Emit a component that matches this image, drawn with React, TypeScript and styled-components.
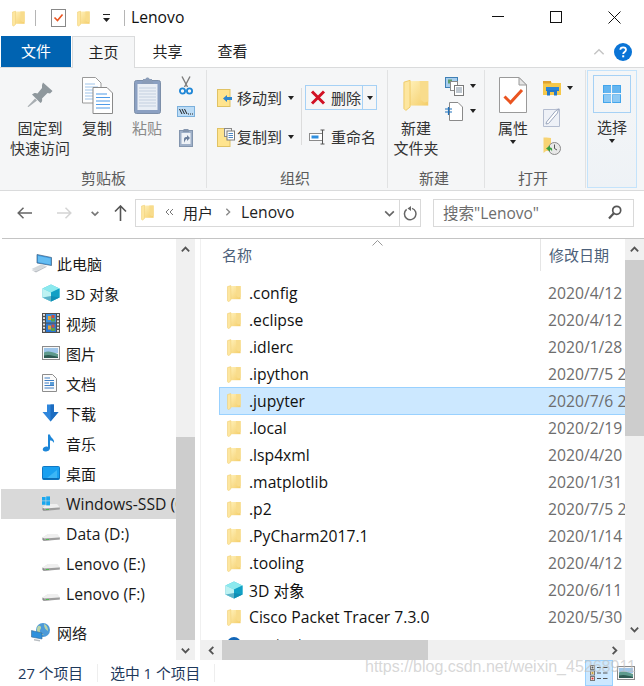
import React from "react";
import styled, { createGlobalStyle } from "styled-components";

const Global = createGlobalStyle`
  html, body { margin: 0; padding: 0; background: #fff; overflow: hidden; }
  * { box-sizing: border-box; }
  body { font-family: "Open Sans", "Noto Sans CJK SC", sans-serif; font-size: 15px; color: #1a1a1a; }
`;

const Window = styled.div`
  position: relative; width: 644px; height: 686px; display: flex; flex-direction: column; overflow: hidden; background: #fff;
`;

/* ---------- title bar ---------- */
const TitleBar = styled.div`display: flex; align-items: center; height: 36px; padding-left: 12px; flex: none;`;
const TitleDivider = styled.span<{ $l: number; $r: number }>`
  width: 1px; height: 16px; background: #b5b5b5; margin: 0 ${p => p.$r}px 0 ${p => p.$l}px;
`;
const TitleText = styled.span`flex: 1; font-size: 15.7px; line-height: 20px; color: #111; margin-bottom: 2px;`;
const WindowButton = styled.div`width: 58px; height: 36px; display: flex; align-items: center; justify-content: center; margin-top: -2px;`;
const WindowControls = styled.div`display: flex; margin-right: 1px;`;
const QuickGap = styled.span<{ $w: number }>`display: inline-block; width: ${p => p.$w}px;`;

/* ---------- tabs ---------- */
const TabRow = styled.div`display: flex; align-items: stretch; height: 31px; padding-left: 1px; flex: none;`;
const FileTab = styled.div`
  width: 70px; background: #0063b1; color: #fff; display: flex; align-items: center; justify-content: center; font-size: 15px; padding-bottom: 2px;
`;
const Tab = styled.div<{ $active?: boolean }>`
  width: ${p => (p.$active ? 63 : 65)}px; display: flex; align-items: center; justify-content: center; font-size: 15px; color: #222;
  margin-left: ${p => (p.$active ? 1 : 0)}px;
  padding-bottom: ${p => (p.$active ? 3 : 2)}px;
  background: ${p => (p.$active ? "#f5f6f7" : "transparent")};
  border: ${p => (p.$active ? "1px solid #dadbdc" : "none")};
  border-bottom: none;
  height: ${p => (p.$active ? 32 : 31)}px;
  position: relative; z-index: 1;
`;
const TabRight = styled.div`margin-left: auto; display: flex; align-items: center; gap: 8px; padding-right: 12px;`;

/* ---------- ribbon ---------- */
const Ribbon = styled.div`
  display: flex; height: 124px; flex: none; background: #f5f6f7; border-top: 1px solid #dadbdc; border-bottom: 1px solid #dadbdc; padding: 2px 0 2px 1px;
`;
const Group = styled.div<{ $w: number }>`
  width: ${p => p.$w}px; display: flex; flex-direction: column; border-right: 1px solid #e1e2e3; flex: none;
`;
const GroupBody = styled.div<{ $pl: number }>`flex: 1; display: flex; padding-left: ${p => p.$pl}px; padding-top: 5px;`;
const GroupLabel = styled.div<{ $pr?: number }>`
  height: 20px; line-height: 20px; text-align: center; font-size: 15px; color: #5b5b5b; padding-right: ${p => p.$pr ?? 0}px;
`;
const BigButton = styled.div<{ $w: number; $mr?: number; $muted?: boolean }>`
  width: ${p => p.$w}px; margin-right: ${p => p.$mr ?? 0}px; display: flex; flex-direction: column; align-items: center;
  font-size: 15px; line-height: 20px; color: ${p => (p.$muted ? "#8a8a8a" : "#333")}; white-space: nowrap;
`;
const BigText = styled.div`text-align: center;`;
const BigIcon = styled.div`height: 40px; margin-bottom: 3px; display: flex; align-items: center; justify-content: center;`;
const Caret = styled.span`display: block; width: 0; height: 0; border: 3px solid transparent; border-top: 4px solid #222; border-bottom: none; flex: none;`;
const BigCaret = styled(Caret)`margin-top: 2px;`;
const SmallColumn = styled.div<{ $gap: number; $pt: number; $w: number; $align?: string }>`
  width: ${p => p.$w}px; display: flex; flex-direction: column; gap: ${p => p.$gap}px; padding-top: ${p => p.$pt}px;
  align-items: ${p => p.$align ?? "center"};
`;
const SmallRow = styled.div`display: flex; align-items: center; font-size: 15px; line-height: 20px; height: 20px; color: #333; white-space: nowrap;`;
const RowIconBox = styled.span<{ $w: number; $pl?: number }>`width: ${p => p.$w}px; padding-left: ${p => p.$pl ?? 0}px; display: flex; align-items: center; flex: none;`;
const RowCaret = styled(Caret)<{ $ml: number }>`margin-left: ${p => p.$ml}px;`;
const OrgLeft = styled.div`width: 84px; padding-top: 13px; display: flex; flex-direction: column; gap: 19px;`;
const OrgSeparator = styled.div`width: 1px; height: 57px; margin-top: 13px; background: #dcdcdc; margin-right: 3px;`;
const OrgRight = styled.div`width: 73px; padding-top: 10px; display: flex; flex-direction: column;`;
const DeleteButton = styled.div`
  display: flex; align-items: center; width: 72px; height: 25px; border: 1px solid #a6d1f5; margin-bottom: 17px; font-size: 15px; color: #333;
`;
const DeleteMain = styled.div`display: flex; align-items: center; padding-left: 4px; width: 57px; gap: 5px; height: 100%; border-right: 1px solid #a6d1f5;`;
const DeleteDrop = styled.div`flex: 1; display: flex; align-items: center; justify-content: center;`;
const SelectGroup = styled.div`
  width: 50px; margin-left: 1px; display: flex; flex-direction: column; flex: none; align-items: center; position: relative;
  border: 1px solid #c4e3fb; background: linear-gradient(#f5f6f7, #eef2f6);
`;
const SelectInner = styled.div`
  width: 38px; height: 38px; margin-top: 4px; border: 1px solid #a6d1f5; display: flex; align-items: center; justify-content: center;
`;
const SelectLabel = styled.div`font-size: 15px; line-height: 20px; margin-top: 4px; color: #333;`;

/* ---------- address row ---------- */
const AddressRow = styled.div`
  display: flex; align-items: center; height: 48px; flex: none; margin-left: 2px; border-bottom: 1px solid #c4c4c4; padding: 0 10px 3px 15px;
`;
const NavButton = styled.span<{ $w: number; $mr: number }>`width: ${p => p.$w}px; margin-right: ${p => p.$mr}px; display: flex; justify-content: center; align-items: center; flex: none;`;
const AddressBox = styled.div`
  width: 286px; height: 28px; border: 1px solid #d9d9d9; display: flex; align-items: center; padding-left: 5px; margin-right: 12px; flex: none; font-size: 15px; color: #222;
`;
const Crumb = styled.span<{ $ml: number; $latin?: boolean }>`
  margin-left: ${p => p.$ml}px; margin-bottom: 2px; display: flex; align-items: center; white-space: nowrap;
  font-size: ${p => (p.$latin ? 15.7 : 15)}px;
`;
const AddressEnd = styled.div`margin-left: auto; display: flex; align-items: center; height: 100%;`;
const AddressRefresh = styled.div`width: 21px; height: 100%; border-left: 1px solid #d9d9d9; display: flex; align-items: center; justify-content: center; margin-left: 3px;`;
const SearchBox = styled.div`
  width: 201px; height: 28px; border: 1px solid #d9d9d9; display: flex; align-items: center; justify-content: space-between; padding: 0 11px 2px 9px; font-size: 15.5px; color: #6d6d6d; flex: none;
`;

/* ---------- main ---------- */
const Main = styled.div`display: flex; height: 421px; flex: none;`;
const NavPane = styled.div`width: 176px; padding: 10px 0 0 1px; overflow: hidden; flex: none;`;
const NavRow = styled.div<{ $top?: boolean; $selected?: boolean; $latin?: boolean }>`
  height: 30px; display: flex; align-items: center; white-space: nowrap; color: #1a1a1a; overflow: hidden;
  font-size: ${p => (p.$latin ? 15.7 : 15)}px;
  padding-left: ${p => (p.$top ? 30 : 41)}px;
  padding-bottom: ${p => (p.$latin ? 0 : 2)}px;
  background: ${p => (p.$selected ? "#d9d9d9" : "transparent")};
`;
const NavIcon = styled.span<{ $top?: boolean }>`
  width: ${p => (p.$top ? 26 : 24)}px; display: flex; align-items: center; flex: none;
`;
const NavGap = styled.div`height: 9px;`;
const VScroll = styled.div`width: 19px; background: #f0f0f0; display: flex; flex-direction: column; flex: none;`;
const ScrollButton = styled.div<{ $size: number }>`flex: 0 0 ${p => p.$size}px; display: flex; align-items: center; justify-content: center;`;
const ScrollThumb = styled.div<{ $size: number }>`flex: 0 0 ${p => p.$size}px; background: #cdcdcd;`;
const ScrollTrack = styled.div`flex: 1;`;
const PaneDivider = styled.div`width: 6px; border-right: 1px solid #f0f0f0; flex: none;`;
const FilePane = styled.div`flex: 1; display: flex; flex-direction: column; min-width: 0;`;
const FileBody = styled.div`flex: 1; display: flex; min-height: 0;`;
const FileArea = styled.div`flex: 1; position: relative; overflow: hidden; min-width: 0;`;
const FileVScroll = styled(VScroll)`height: 401px;`;
const Header = styled.div`display: flex; height: 32px; margin-bottom: 8px; font-size: 15px; color: #4c607a;`;
const HeaderName = styled.div`width: 340px; padding-left: 21px; border-right: 1px solid #e5e5e5; line-height: 32px;`;
const HeaderDate = styled.div`padding-left: 8px; line-height: 32px; white-space: nowrap;`;
const SortCaret = styled.svg`position: absolute; left: 171px; top: 1px;`;
const Row = styled.div<{ $selected?: boolean }>`
  display: grid; grid-template-columns: 22px 299px 1fr; align-items: center; height: 27px; margin-left: 18px; padding-left: 7px;
  border: 1px solid ${p => (p.$selected ? "#99d1ff" : "transparent")};
  border-bottom: none; border-right: none;
  background: ${p => (p.$selected ? "#cce8ff" : "transparent")};
  box-shadow: ${p => (p.$selected ? "0 1px 0 #99d1ff" : "none")};
  font-size: 15.7px; white-space: nowrap;
`;
const RowIcon = styled.span<{ $wide?: boolean }>`display: flex; align-items: center; margin-left: ${p => (p.$wide ? -2 : 0)}px;`;
const RowName = styled.span`color: #111; overflow: hidden;`;
const RowDate = styled.span`color: #6d6d6d; overflow: hidden;`;
const BottomBar = styled.div`display: flex; height: 20px; flex: none;`;
const HScroll = styled.div`flex: 1; display: flex; background: #f0f0f0;`;
const Corner = styled.div`width: 19px;`;
const StatusBar = styled.div`flex: 1; display: flex; align-items: center; padding-left: 18px; font-size: 14.8px; color: #1e395b;`;
const StatusText = styled.span`margin-bottom: 2px;`;
const StatusSep = styled.span<{ $l: number; $r: number }>`width: 1px; height: 18px; background: #eeeeee; margin: 0 ${p => p.$r}px 0 ${p => p.$l}px;`;
const ViewButtons = styled.div`margin-left: auto; display: flex; align-items: center; height: 100%; padding-right: 9px;`;
const DetailsButton = styled.div`
  width: 28px; height: 100%; background: #cce8ff; border: 1px solid #99d1ff; display: flex; align-items: center; justify-content: center; margin-right: 4px;
`;
const Watermark = styled.div`
  position: absolute; left: 365px; top: 658px; font-family: "Liberation Sans", sans-serif; font-size: 16px; color: rgba(190,190,190,.62); white-space: nowrap; pointer-events: none;
`;

/* ---------- drawings ---------- */
const Folder = ({ w = 14, h = 17 }: { w?: number; h?: number }) => (
  <svg width={w} height={h} viewBox="0 0 14 17">
    <defs>
      <linearGradient id="fg" x1="0" y1="0" x2="1" y2="1">
        <stop offset="0" stopColor="#fff0b8" />
        <stop offset="1" stopColor="#f4cd68" />
      </linearGradient>
    </defs>
    <path d="M3.5 1H13.6V14.2H3.5Z" fill="url(#fg)" />
    <path d="M9 1H13.6V12L11.5 12.5L9.5 11Z" fill="#f8dc8c" />
    <path d="M0.5 1.6L3.8 0.6V15L1.5 16.8L0.5 15.8Z" fill="#fde69f" stroke="#eec965" strokeWidth=".5" />
  </svg>
);
const Cube = ({ s = 18 }: { s?: number }) => (
  <svg width={s} height={s} viewBox="0 0 18 18">
    <path d="M9 0.5L17.5 4.5V13.5L9 17.5L0.5 13.5V4.5Z" fill="#3fc4d8" />
    <path d="M9 0.5L17.5 4.5L9 8.5L0.5 4.5Z" fill="#8ce9ee" />
    <path d="M0.5 4.5L9 8.5V17.5L0.5 13.5Z" fill="#bdf2f2" />
    <path d="M9 8.5L17.5 4.5V13.5L9 17.5Z" fill="#12a0c5" />
    <path d="M9 12L17.5 13.5L9 17.5L0.5 13.5Z" fill="#0d7fa8" opacity=".55" />
  </svg>
);
const Film = () => (
  <svg width="18" height="20" viewBox="0 0 18 20">
    <rect x="0" y="0" width="18" height="20" fill="#4e4e4e" />
    <g fill="#e5e5e5">
      {[1, 4.2, 7.4, 10.6, 13.8, 17].map(y => <rect key={y} x="1" y={y} width="2" height="1.8" />)}
      {[1, 4.2, 7.4, 10.6, 13.8, 17].map(y => <rect key={y} x="15" y={y} width="2" height="1.8" />)}
    </g>
    <rect x="4" y="1" width="10" height="8.5" fill="#3b8fe0" />
    <rect x="4" y="10.5" width="10" height="8.5" fill="#2b76d2" />
    <rect x="6" y="3" width="3" height="4" fill="#e0a33a" /><rect x="9.5" y="2" width="3" height="3" fill="#c94f3c" /><rect x="9" y="5.5" width="4" height="3" fill="#5aa04a" />
    <rect x="6" y="12.5" width="3" height="4" fill="#e0a33a" /><rect x="9.5" y="11.5" width="3" height="3" fill="#c94f3c" /><rect x="9" y="15" width="4" height="3" fill="#5aa04a" />
  </svg>
);
const PictureIcon = ({ w = 18, h = 14 }: { w?: number; h?: number }) => (
  <svg width={w} height={h} viewBox="0 0 18 14">
    <rect x=".5" y=".5" width="17" height="13" fill="#f7f7f7" stroke="#8b8b8b" />
    <rect x="2" y="2" width="14" height="5" fill="#9fc6ea" />
    <path d="M2 6.5C6 4.5 10 6 16 8V12H2Z" fill="#5e9a8c" />
    <path d="M2 9.5C7 8 11 9.5 16 11V12H2Z" fill="#2e5a52" />
  </svg>
);
const DocIcon = () => (
  <svg width="15" height="18" viewBox="0 0 15 18">
    <path d="M.5.5H10.5L14.5 4.5V17.5H.5Z" fill="#fbfbfb" stroke="#8d8d8d" />
    <path d="M2.5 4H8M2.5 6.5H12M2.5 9H7M2.5 11.5H12M2.5 14H12" stroke="#3f7fc4" strokeWidth="1" />
    <rect x="8" y="8" width="4" height="3" fill="#5c9ed8" />
  </svg>
);
const DownArrow = () => (
  <svg width="17" height="18" viewBox="0 0 17 18">
    <path d="M5 .5H12V8H16.5L8.5 17.5L.5 8H5Z" fill="#2f86dc" />
    <path d="M8.5 .5H12V8H16.5L8.5 17.5Z" fill="#1c6cc0" />
  </svg>
);
const Note = () => (
  <svg width="14" height="18" viewBox="0 0 14 18">
    <path d="M6 0.5H8C8.5 4 13 5 12 9C11 7 9.5 6.5 8 6.5V14C8 16.5 5.5 17.5 3.5 17.5C1.5 17.5 .5 16.5 .8 15C1.2 13 4 12 6 13Z" fill="#1d86d8" />
  </svg>
);
const Desktop = () => (
  <svg width="18" height="14" viewBox="0 0 18 14">
    <rect x=".5" y=".5" width="17" height="13" rx="1" fill="#19a0f0" stroke="#1078c4" />
    <path d="M5 12L15 4V12Z" fill="#3cb6f6" />
    <rect x="1" y="12" width="16" height="1.4" fill="#0c6cb4" />
  </svg>
);
const Drive = ({ win }: { win?: boolean }) => (
  <svg width="18" height="16" viewBox="0 0 18 16">
    <path d="M0.5 11.5L6 8H15L17.8 11.5V13.5L2 14.5L0.5 13.5Z" fill="#dcdcdc" />
    <path d="M0.5 11.5L2 12.5L17.8 11.5L15 8H6Z" fill="#efefef" />
    <path d="M0.5 11.5L2 12.5V15L0.5 14Z" fill="#8a8a8a" />
    <path d="M2 12.5L17.8 11.5V13.5L2 15Z" fill="#9d9d9d" />
    <rect x="4" y="13" width="3" height="1" fill="#4dbd4d" />
    {win && (
      <g fill="#19a7ef">
        <rect x="0" y="1" width="3.6" height="3.6" /><rect x="4.2" y="0.4" width="3.8" height="4.2" />
        <rect x="0" y="5.2" width="3.6" height="3.6" /><rect x="4.2" y="5.2" width="3.8" height="4.2" />
      </g>
    )}
  </svg>
);
const ComputerIcon = () => (
  <svg width="21" height="19" viewBox="0 0 21 19">
    <path d="M6 .5L20.5 3.5V11.5L6 9Z" fill="#3f9fe6" stroke="#3e5f80" strokeWidth=".7" />
    <path d="M7 2L19.5 4.5V10.5L7 8Z" fill="#65bdf2" />
    <path d="M0.5 15L10 10.5L15.5 12L5 17Z" fill="#d5d9dc" />
    <path d="M5 17L15.5 12L15.5 13L5 18.5L.5 16Z" fill="#bcc1c6" />
  </svg>
);
const NetworkIcon = () => (
  <svg width="20" height="19" viewBox="0 0 20 19">
    <circle cx="12" cy="7" r="7" fill="#4d9ad8" />
    <path d="M7 3C10 2 11 5 9 7C8 9 11 11 13 12L9 12C6 10 5 6 7 3ZM13 1C16 2 17 5 17 8C15 7 13 5 13 1Z" fill="#b8d4a8" />
    <path d="M0.5 7.5L11 10V16L0.5 14Z" fill="#2e90dc" stroke="#3a6a90" strokeWidth=".6" />
    <path d="M3 16L9 17V18.5L3 17.5Z" fill="#b9bec2" />
  </svg>
);
const Pin = () => (
  <svg width="26" height="26" viewBox="0 0 26 26">
    <path d="M16 0.5L25.5 9L23 11.5L20.5 11L15 16.5C15.5 18.5 15 20 13.5 21L5 12.5C6.5 11 8.5 10.5 10.5 11.5L15 6V3Z" fill="#8f989d" />
    <path d="M8 16.5L10 18.5L1.5 25L0.5 24.5Z" fill="#a8aeb2" />
  </svg>
);
const CopyIcon = () => (
  <svg width="31" height="37" viewBox="0 0 31 37">
    <path d="M.5.5H13.5L19 6V26H.5Z" fill="#fff" stroke="#9a9a9a" />
    <path d="M3 7H13M3 10H16M3 13H16M3 16H16M3 19H16M3 22H16" stroke="#9fc4ea" />
    <path d="M11 10.5H25L30.5 16V36.5H11Z" fill="#fff" stroke="#8a8a8a" />
    <path d="M14 17H25M14 20.5H28M14 24H28M14 27.5H28M14 31H28" stroke="#4f9be8" />
  </svg>
);
const PasteIcon = () => (
  <svg width="27" height="38" viewBox="0 0 27 38">
    <rect x=".5" y="4.5" width="26" height="33" rx="2" fill="#8ba0c2" stroke="#7d8fa9" />
    <rect x="3.5" y="8" width="20" height="26" fill="#e9eef5" />
    <path d="M5 12H22M5 15H22M5 18H22M5 21H22M5 24H22M5 27H22M5 30H22" stroke="#c3cfdf" />
    <path d="M9 5V3H11.5C12 1 15 1 15.5 3H18V5L20 8H7Z" fill="#8a9cb8" />
  </svg>
);
const Scissors = () => (
  <svg width="14" height="19" viewBox="0 0 14 19">
    <path d="M3 .5L8.5 11M11 .5L5.5 11" stroke="#7d7d7d" strokeWidth="1.4" fill="none" />
    <circle cx="3.5" cy="15" r="2.6" fill="none" stroke="#1f86d6" strokeWidth="1.8" />
    <circle cx="10.5" cy="15" r="2.6" fill="none" stroke="#1f86d6" strokeWidth="1.8" />
  </svg>
);
const PathIcon = () => (
  <svg width="18" height="11" viewBox="0 0 18 11">
    <rect x=".5" y=".5" width="17" height="10" fill="#bcdcf6" stroke="#7bb0dc" />
    <path d="M2.5 3L5 8M5 3L7.5 8M7.5 3L10 8" stroke="#222" strokeWidth="1" />
    <path d="M11 8H12M13 8H14M15 8H16" stroke="#222" />
  </svg>
);
const ShortcutPaste = () => (
  <svg width="14" height="19" viewBox="0 0 14 19">
    <rect x=".5" y="2.5" width="13" height="16" fill="#9fb0c8" stroke="#8395ae" />
    <rect x="2.5" y="5" width="9" height="11" fill="#eef2f7" />
    <path d="M4.5 2.5V1H9.5V2.5L10.5 4H3.5Z" fill="#8495ad" />
    <path d="M5 15V11C5 9.5 6 9 8 9V7L11 10L8 13V11C7 11 6.5 11.5 5 15Z" fill="#6b7f9c" />
  </svg>
);
const MoveTo = () => (
  <svg width="15" height="18" viewBox="0 0 15 18">
    <rect x=".5" y=".5" width="12.5" height="17" fill="#ffe48e" stroke="#e0c264" />
    <path d="M6 9.5L10 6V8H15V11H10V13Z" fill="#2f86cf" />
  </svg>
);
const CopyTo = () => (
  <svg width="18" height="19" viewBox="0 0 18 19">
    <rect x=".5" y=".5" width="12.5" height="18" fill="#ffe48e" stroke="#e0c264" />
    <rect x="7.5" y=".5" width="7" height="8" fill="#f2f2f2" stroke="#8a8a8a" />
    <rect x="10" y="3" width="7.5" height="9" fill="#fff" stroke="#7a7a7a" />
    <path d="M11.5 5.5H16M11.5 7.5H16M11.5 9.5H16" stroke="#4f87c4" />
  </svg>
);
const DeleteX = () => (
  <svg width="16" height="15" viewBox="0 0 16 15">
    <path d="M2 1.5L14 13.5M14 1.5L2 13.5" stroke="#d11124" strokeWidth="3" />
  </svg>
);
const RenameIcon = () => (
  <svg width="17" height="16" viewBox="0 0 17 16">
    <rect x=".5" y="4.5" width="13" height="7" fill="#fff" stroke="#8a8a8a" />
    <rect x="2.5" y="6.5" width="7" height="3" fill="#2f8ede" />
    <path d="M11.5 1H15.5M13.5 1V15M11.5 15H15.5" stroke="#555" />
  </svg>
);
const NewItems = () => (
  <svg width="19" height="19" viewBox="0 0 19 19">
    <rect x=".5" y=".5" width="12" height="10" fill="#a7cdee" stroke="#3f80b5" />
    <rect x="3" y="2.5" width="4" height="4" fill="#5f9e6d" />
    <rect x="5.5" y="4.5" width="7" height="9" fill="#fff" stroke="#8a8a8a" />
    <rect x="9.5" y="8.5" width="9" height="10" fill="#fff" stroke="#7a7a7a" />
    <path d="M11 11H17M11 13H17M11 15H17" stroke="#7f8fa0" />
  </svg>
);
const EasyAccess = () => (
  <svg width="18" height="19" viewBox="0 0 18 19">
    <path d="M4.5.5H13L17.5 5V18.5H4.5Z" fill="#fff" stroke="#8a8a8a" />
    <path d="M0 7H7M0 10H7M3.5 5V13" stroke="#1f70ba" strokeWidth="1.2" />
  </svg>
);
const PropertiesIcon = () => (
  <svg width="28" height="36" viewBox="0 0 28 36">
    <path d="M.5.5H20L27.5 8V35.5H.5Z" fill="#fff" stroke="#9a9a9a" />
    <path d="M20 .5V8H27.5Z" fill="#e5e5e5" stroke="#9a9a9a" />
    <path d="M5.5 19.5L11.5 25.5L23 13" stroke="#ea5420" strokeWidth="3" fill="none" />
  </svg>
);
const OpenIcon = () => (
  <svg width="19" height="17" viewBox="0 0 19 17">
    <path d="M0 1H7L9 3H18V15H0Z" fill="#f6c849" />
    <rect x="0" y="1" width="8" height="2.5" fill="#e0a22f" />
    <path d="M3 8H16V11H14V15.5H11V12H7V15.5H4V11H3Z" fill="#2579c9" />
    <rect x="3" y="7" width="13" height="3" fill="#2b85d8" />
  </svg>
);
const EditIcon = () => (
  <svg width="17" height="19" viewBox="0 0 17 19">
    <path d="M.5 1.5H12L16.5 1V18.5H.5Z" fill="#eef1f7" stroke="#b4bdd0" />
    <path d="M3.5 14L12.5 3L15.5 1L14.5 5L5.5 15.5L3 16Z" fill="#fff" stroke="#9aa6bd" />
  </svg>
);
const HistoryIcon = () => (
  <svg width="18" height="18" viewBox="0 0 18 18">
    <path d="M.5 0.5H3.5L8 1V14H3L.5 16Z" fill="#f7d373" />
    <circle cx="11.5" cy="11.5" r="6" fill="#e8e8e8" stroke="#8a8a8a" />
    <path d="M11.5 7.5V11.5L14 13" stroke="#555" fill="none" />
    <path d="M3 11.5L7 8.5V10.5C9 10.5 9.5 12 9 14.5C8.5 13 7.5 12.5 7 12.5V14.5Z" fill="#38a03a" />
  </svg>
);
const SelectGrid = () => (
  <svg width="18" height="18" viewBox="0 0 18 18">
    <rect width="18" height="18" fill="#42a5ec" />
    <rect x="1" y="1" width="7.2" height="7.2" fill="#64b5f0" /><rect x="9.8" y="1" width="7.2" height="7.2" fill="#64b5f0" />
    <rect x="1" y="9.8" width="7.2" height="7.2" fill="#8dc9f4" /><rect x="9.8" y="9.8" width="7.2" height="7.2" fill="#8dc9f4" />
    <path d="M8.6 0V18M0 8.6H18" stroke="#f5f6f7" strokeWidth="1.2" />
  </svg>
);
const Chevron = ({ dir, s = 11, c = "#555", w = 2 }: { dir: "up" | "down" | "left" | "right"; s?: number; c?: string; w?: number }) => {
  const d = { up: "M2 8L6 4L10 8", down: "M2 4L6 8L10 4", left: "M8 2L4 6L8 10", right: "M4 2L8 6L4 10" }[dir];
  return <svg width={s} height={s} viewBox="0 0 12 12"><path d={d} fill="none" stroke={c} strokeWidth={w} /></svg>;
};
const BackArrow = () => (
  <svg width="16" height="12" viewBox="0 0 16 12">
    <path d="M1 6H15M6.5 .8L1.2 6L6.5 11.2" fill="none" stroke="#666" strokeWidth="1.5" />
  </svg>
);
const ForwardArrow = () => (
  <svg width="16" height="12" viewBox="0 0 16 12">
    <path d="M1 6H15M9.5 .8L14.8 6L9.5 11.2" fill="none" stroke="#d4d4d4" strokeWidth="1.5" />
  </svg>
);
const UpArrow = () => (
  <svg width="13" height="16" viewBox="0 0 13 16">
    <path d="M6.5 16V1M1 6.5L6.5 1L12 6.5" fill="none" stroke="#555" strokeWidth="1.6" />
  </svg>
);
const Refresh = () => (
  <svg width="15" height="15" viewBox="0 0 15 15">
    <path d="M9 2.4A5.8 5.8 0 1 1 3.6 3.4" fill="none" stroke="#666" strokeWidth="1.5" />
    <path d="M8 0V5L4.5 2.5Z" fill="#666" />
  </svg>
);
const Magnifier = () => (
  <svg width="14" height="15" viewBox="0 0 14 15">
    <circle cx="8.7" cy="5.3" r="4" fill="none" stroke="#555" strokeWidth="1.7" />
    <path d="M5.8 8.2L1 13.5" stroke="#555" strokeWidth="2.2" />
  </svg>
);
const DetailsIcon = () => (
  <svg width="18" height="16" viewBox="0 0 18 16">
    {[0, 5.5, 11].map((y, i) => (
      <g key={y}>
        <rect x=".5" y={y + .5} width="4" height="4" fill="#fff" stroke="#777" />
        <rect x="1.5" y={y + 1.5} width="2" height="2" fill={["#555", "#c9a03a", "#d0312d"][i]} />
        <path d={`M7 ${y + 2.5}H11M13 ${y + 2.5}H17.5`} stroke="#555" />
      </g>
    ))}
  </svg>
);

const files: [string, string, ("folder" | "cube")?][] = [
  [".config", "2020/4/12 16:25"], [".eclipse", "2020/4/12 16:31"], [".idlerc", "2020/1/28 11:08"],
  [".ipython", "2020/7/5 22:14"], [".jupyter", "2020/7/6 20:41"], [".local", "2020/2/19 19:22"],
  [".lsp4xml", "2020/4/20 9:37"], [".matplotlib", "2020/1/31 16:02"], [".p2", "2020/7/5 21:45"],
  [".PyCharm2017.1", "2020/1/14 18:40"], [".tooling", "2020/4/12 16:28"], ["3D 对象", "2020/6/11 8:19", "cube"],
  ["Cisco Packet Tracer 7.3.0", "2020/5/30 10:11"],
];
const libs: [string, React.ReactNode][] = [
  ["3D 对象", <Cube />], ["视频", <Film />], ["图片", <PictureIcon />], ["文档", <DocIcon />],
  ["下载", <DownArrow />], ["音乐", <Note />], ["桌面", <Desktop />],
];

export default function App() {
  return (
    <Window>
      <Global />
      <TitleBar>
        <Folder w={13} h={17} />
        <TitleDivider $l={10} $r={15} />
        <svg width="15" height="18" viewBox="0 0 15 18">
          <rect x=".5" y=".5" width="14" height="17" fill="#fff" stroke="#888" />
          <path d="M3.5 8.5L6.5 11.5L11.5 5.5" fill="none" stroke="#ea5420" strokeWidth="1.6" />
        </svg>
        <QuickGap $w={11} />
        <Folder w={13} h={17} />
        <QuickGap $w={13} />
        <svg width="7" height="9" viewBox="0 0 7 9"><path d="M0 0H7V1H0ZM0 4H7L3.5 8Z" fill="#222" /></svg>
        <TitleDivider $l={14} $r={6} />
        <TitleText>Lenovo</TitleText>
        <WindowControls>
          <WindowButton><svg width="12" height="12" viewBox="0 0 12 12"><path d="M0 5.5H12" stroke="#111" /></svg></WindowButton>
          <WindowButton><svg width="12" height="12" viewBox="0 0 12 12"><rect x=".5" y=".5" width="11" height="11" fill="none" stroke="#111" /></svg></WindowButton>
          <WindowButton><svg width="13" height="13" viewBox="0 0 13 13"><path d="M.5.5L12.5 12.5M12.5.5L.5 12.5" stroke="#111" /></svg></WindowButton>
        </WindowControls>
      </TitleBar>

      <TabRow>
        <FileTab>文件</FileTab>
        <Tab $active>主页</Tab>
        <Tab>共享</Tab>
        <Tab>查看</Tab>
        <TabRight>
          <Chevron dir="up" s={14} c="#c4c4c4" w={1.2} />
          <svg width="18" height="18" viewBox="0 0 18 18">
            <circle cx="9" cy="9" r="9" fill="#0a74d6" />
            <path d="M6.3 6.8C6.3 3.5 12 3.5 12 6.8C12 9 9.2 8.8 9.2 11" fill="none" stroke="#fff" strokeWidth="1.8" />
            <rect x="8.2" y="12.3" width="2" height="2" fill="#fff" />
          </svg>
        </TabRight>
      </TabRow>

      <Ribbon>
        <Group $w={206}>
          <GroupBody $pl={9}>
            <BigButton $w={60} $mr={7}><BigIcon><Pin /></BigIcon><BigText>固定到<br />快速访问</BigText></BigButton>
            <BigButton $w={40} $mr={10}><BigIcon><CopyIcon /></BigIcon><BigText>复制</BigText></BigButton>
            <BigButton $w={40} $mr={9} $muted><BigIcon><PasteIcon /></BigIcon><BigText>粘贴</BigText></BigButton>
            <SmallColumn $w={20} $gap={11} $pt={1}>
              <Scissors />
              <PathIcon />
              <ShortcutPaste />
            </SmallColumn>
          </GroupBody>
          <GroupLabel>剪贴板</GroupLabel>
        </Group>

        <Group $w={181}>
          <GroupBody $pl={10}>
            <OrgLeft>
              <SmallRow><RowIconBox $w={20}><MoveTo /></RowIconBox>移动到<RowCaret $ml={6} /></SmallRow>
              <SmallRow><RowIconBox $w={20}><CopyTo /></RowIconBox>复制到<RowCaret $ml={6} /></SmallRow>
            </OrgLeft>
            <OrgSeparator />
            <OrgRight>
              <DeleteButton>
                <DeleteMain><DeleteX /><span>删除</span></DeleteMain>
                <DeleteDrop><Caret /></DeleteDrop>
              </DeleteButton>
              <SmallRow><RowIconBox $w={26} $pl={4}><RenameIcon /></RowIconBox>重命名</SmallRow>
            </OrgRight>
          </GroupBody>
          <GroupLabel $pr={4}>组织</GroupLabel>
        </Group>

        <Group $w={97}>
          <GroupBody $pl={5}>
            <BigButton $w={46} $mr={6}><BigIcon><Folder w={26} h={34} /></BigIcon><BigText>新建<br />文件夹</BigText></BigButton>
            <SmallColumn $w={34} $gap={5} $pt={1} $align="flex-start">
              <SmallRow><RowIconBox $w={25}><NewItems /></RowIconBox><Caret /></SmallRow>
              <SmallRow><RowIconBox $w={25}><EasyAccess /></RowIconBox><Caret /></SmallRow>
            </SmallColumn>
          </GroupBody>
          <GroupLabel $pr={4}>新建</GroupLabel>
        </Group>

        <Group $w={101}>
          <GroupBody $pl={8}>
            <BigButton $w={40} $mr={10}><BigIcon><PropertiesIcon /></BigIcon><BigText>属性</BigText><BigCaret /></BigButton>
            <SmallColumn $w={36} $gap={9} $pt={3} $align="flex-start">
              <SmallRow><RowIconBox $w={24}><OpenIcon /></RowIconBox><Caret /></SmallRow>
              <SmallRow><RowIconBox $w={24}><EditIcon /></RowIconBox></SmallRow>
              <SmallRow><RowIconBox $w={24}><HistoryIcon /></RowIconBox></SmallRow>
            </SmallColumn>
          </GroupBody>
          <GroupLabel $pr={4}>打开</GroupLabel>
        </Group>

        <SelectGroup>
          <SelectInner><SelectGrid /></SelectInner>
          <SelectLabel>选择</SelectLabel>
          <BigCaret />
        </SelectGroup>
      </Ribbon>

      <AddressRow>
        <NavButton $w={16} $mr={23}><BackArrow /></NavButton>
        <NavButton $w={16} $mr={18}><ForwardArrow /></NavButton>
        <NavButton $w={10} $mr={14}><Chevron dir="down" c="#777" /></NavButton>
        <NavButton $w={13} $mr={8}><UpArrow /></NavButton>
        <AddressBox>
          <Crumb $ml={0}><Folder w={13} h={17} /></Crumb>
          <Crumb $ml={11}><svg width="9" height="8" viewBox="0 0 9 8"><path d="M4 1L1 4L4 7M8 1L5 4L8 7" fill="none" stroke="#777" /></svg></Crumb>
          <Crumb $ml={9}>用户</Crumb>
          <Crumb $ml={10}><Chevron dir="right" c="#888" s={10} w={1.6} /></Crumb>
          <Crumb $ml={8} $latin>Lenovo</Crumb>
          <AddressEnd>
            <Chevron dir="down" s={13} c="#666" w={1.5} />
            <AddressRefresh><Refresh /></AddressRefresh>
          </AddressEnd>
        </AddressBox>
        <SearchBox>
          <span>搜索"Lenovo"</span>
          <Magnifier />
        </SearchBox>
      </AddressRow>

      <Main>
        <NavPane>
          <NavRow $top><NavIcon $top><ComputerIcon /></NavIcon>此电脑</NavRow>
          {libs.map(([name, icon]) => (
            <NavRow key={name}><NavIcon>{icon}</NavIcon>{name}</NavRow>
          ))}
          <NavRow $selected $latin><NavIcon><Drive win /></NavIcon>Windows-SSD (C:)</NavRow>
          <NavRow $latin><NavIcon><Drive /></NavIcon>Data (D:)</NavRow>
          <NavRow $latin><NavIcon><Drive /></NavIcon>Lenovo (E:)</NavRow>
          <NavRow $latin><NavIcon><Drive /></NavIcon>Lenovo (F:)</NavRow>
          <NavGap />
          <NavRow $top><NavIcon $top><NetworkIcon /></NavIcon>网络</NavRow>
        </NavPane>
        <VScroll>
          <ScrollButton $size={20}><Chevron dir="up" /></ScrollButton>
          <ScrollTrack />
          <ScrollThumb $size={203} />
          <ScrollButton $size={20}><Chevron dir="down" /></ScrollButton>
        </VScroll>
        <PaneDivider />
        <FilePane>
          <FileBody>
            <FileArea>
              <Header>
                <HeaderName>名称</HeaderName>
                <HeaderDate>修改日期</HeaderDate>
              </Header>
              <SortCaret width="11" height="6" viewBox="0 0 11 6"><path d="M.5 5.5L5.5 .5L10.5 5.5" fill="none" stroke="#999" /></SortCaret>
              {files.map(([name, date, kind]) => (
                <Row key={name} $selected={name === ".jupyter"}>
                  <RowIcon $wide={kind === "cube"}>{kind === "cube" ? <Cube /> : <Folder />}</RowIcon>
                  <RowName>{name}</RowName>
                  <RowDate>{date}</RowDate>
                </Row>
              ))}
              <Row>
                <RowIcon>
                  <svg width="14" height="14" viewBox="0 0 14 14"><circle cx="7" cy="7" r="7" fill="#1266b8" /></svg>
                </RowIcon>
                <RowName>contacts</RowName>
              </Row>
            </FileArea>
            <FileVScroll>
              <ScrollButton $size={21}><Chevron dir="up" /></ScrollButton>
              <ScrollThumb $size={176} />
              <ScrollTrack />
              <ScrollButton $size={22}><Chevron dir="down" /></ScrollButton>
            </FileVScroll>
          </FileBody>
          <BottomBar>
            <HScroll>
              <ScrollButton $size={21}><Chevron dir="left" /></ScrollButton>
              <ScrollThumb $size={206} />
              <ScrollTrack />
              <ScrollButton $size={21}><Chevron dir="right" /></ScrollButton>
            </HScroll>
            <Corner />
          </BottomBar>
        </FilePane>
      </Main>

      <StatusBar>
        <StatusText>27 个项目</StatusText>
        <StatusSep $l={14} $r={12} />
        <StatusText>选中 1 个项目</StatusText>
        <StatusSep $l={14} $r={0} />
        <ViewButtons>
          <DetailsButton><DetailsIcon /></DetailsButton>
          <PictureIcon w={18} h={14} />
        </ViewButtons>
      </StatusBar>
      <Watermark>https://blog.csdn.net/weixin_45268911</Watermark>
    </Window>
  );
}
